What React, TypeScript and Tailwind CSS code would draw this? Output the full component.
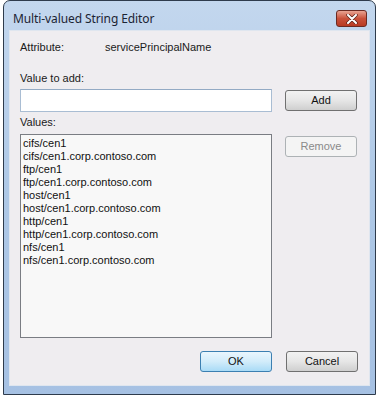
const values = [
  'cifs/cen1',
  'cifs/cen1.corp.contoso.com',
  'ftp/cen1',
  'ftp/cen1.corp.contoso.com',
  'host/cen1',
  'host/cen1.corp.contoso.com',
  'http/cen1',
  'http/cen1.corp.contoso.com',
  'nfs/cen1',
  'nfs/cen1.corp.contoso.com',
]

function Button({ label, variant = 'normal' }: { label: string; variant?: 'normal' | 'default' | 'disabled' }) {
  const styles = {
    normal: 'border-[#707070] bg-gradient-to-b from-[#f2f2f2] via-[#e6e6e6] to-[#cfcfcf] text-[#111]',
    default: 'border-[#3c7fb1] bg-gradient-to-b from-[#eaf6fd] via-[#d2ecfa] to-[#a9dbf6] text-[#111]',
    disabled: 'border-[#adb2b5] bg-[#f4f4f4] text-[#8a8a8a]',
  }
  return (
    <div
      className={`w-[72px] h-[21px] flex items-center justify-center rounded-[3px] border text-[11px] leading-none ${styles[variant]}`}
    >
      {label}
    </div>
  )
}

export default function App() {
  return (
    <div className="w-[378px] h-[395px] bg-white overflow-hidden" style={{ fontFamily: '"Liberation Sans", Arial, sans-serif' }}>
      <div className="ml-[3px] w-[373px] h-[395px] flex flex-col rounded-t-[7px] border border-[#2e3b4c] bg-gradient-to-b from-[#c3d7ee] via-[#aec8e6] to-[#a6c1e3]">
        {/* Title bar */}
        <div className="h-[29px] shrink-0 flex items-center justify-between pt-[6px] pl-[9px] pr-[8px]">
          <span
            className="text-[12px] text-[#1b2433] tracking-[-0.1px]"
            style={{ fontFamily: '"Noto Sans", "Open Sans", sans-serif' }}
          >
            Multi-valued String Editor
          </span>
          <div className="w-[31px] h-[17px] flex items-center justify-center rounded-[3px] border border-[#6b2a22] bg-gradient-to-b from-[#e8a393] via-[#c9513b] to-[#b83a22]">
            <svg width="12" height="10" viewBox="0 0 12 10">
              <path d="M2 1 L10 9 M10 1 L2 9" stroke="#5a2018" strokeWidth="3.4" strokeLinecap="round" />
              <path d="M2 1 L10 9 M10 1 L2 9" stroke="#ffffff" strokeWidth="2" strokeLinecap="round" />
            </svg>
          </div>
        </div>

        {/* Client area */}
        <div className="mx-[5px] mb-[8px] flex-1 flex flex-col border border-[#dfe6ef] bg-[#efedf0] pl-[10px] pr-[11px] pt-[10px] text-[11px] leading-[13px] text-[#1a1a1a]">
          <div className="flex h-[13px]">
            <span className="w-[85px]">Attribute:</span>
            <span>servicePrincipalName</span>
          </div>

          <div className="mt-[18px] h-[13px]">Value to add:</div>

          <div className="mt-[4px] flex gap-[13px]">
            <div className="w-[252px] h-[23px] border border-[#a9bdd3] border-t-[#93aac4] bg-white" />
            <div className="mt-[1px]">
              <Button label="Add" />
            </div>
          </div>

          <div className="mt-[4px] h-[13px]">Values:</div>

          <div className="mt-[5px] flex gap-[13px]">
            <div className="w-[252px] h-[204px] border border-[#7a7d83] bg-[#f8f8f8] px-[2px] pt-[2px]">
              {values.map((v) => (
                <div key={v} className="h-[13px] leading-[13px] text-[#111]">
                  {v}
                </div>
              ))}
            </div>
            <div className="mt-[2px]">
              <Button label="Remove" variant="disabled" />
            </div>
          </div>

          <div className="mt-[13px] flex justify-end gap-[14px]">
            <Button label="OK" variant="default" />
            <Button label="Cancel" />
          </div>
        </div>
      </div>
    </div>
  )
}
